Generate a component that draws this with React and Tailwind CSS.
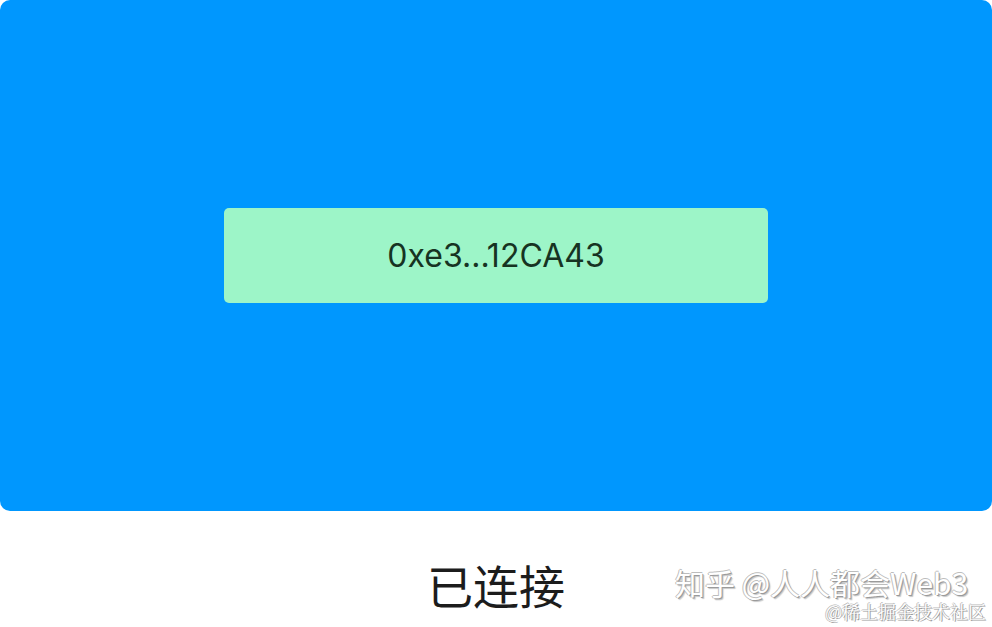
import React from 'react';

const App = () => {
    return (
        <div className="w-[992px] h-[627px] bg-white relative overflow-hidden font-[Inter,'Noto_Sans_CJK_SC',sans-serif]">
            <div className="h-[511px] bg-[#0097fe] rounded-[10px] flex items-center justify-center">
                <button className="w-[544px] h-[95px] bg-[#9df5c8] rounded-[5px] text-[32px] text-[#163322] flex items-center justify-center">
                    0xe3...12CA43
                </button>
            </div>
            <div className="h-[116px] flex items-start justify-center pt-[50px]">
                <span className="text-[46px] leading-none text-[#1c1c1c] font-['Noto_Sans_CJK_SC',sans-serif]">已连接</span>
            </div>
            <div className="absolute left-[675px] top-[567px] text-[30px] leading-none text-white font-['Noto_Sans_CJK_SC',sans-serif] [text-shadow:1px_1px_0_#9a9a9a,-1px_0_0_#bdbdbd,0_-1px_0_#bdbdbd,2px_2px_1px_#c8c8c8]">
                知乎 @人人都会Web3
            </div>
            <div className="absolute right-[6px] top-[602px] text-[18px] leading-none text-white font-['Noto_Serif_CJK_SC','Noto_Sans_CJK_SC',serif] [text-shadow:1px_1px_0_#9a9a9a,-1px_0_0_#bdbdbd,0_-1px_0_#bdbdbd]">
                @稀土掘金技术社区
            </div>
        </div>
    );
};

export default App;
